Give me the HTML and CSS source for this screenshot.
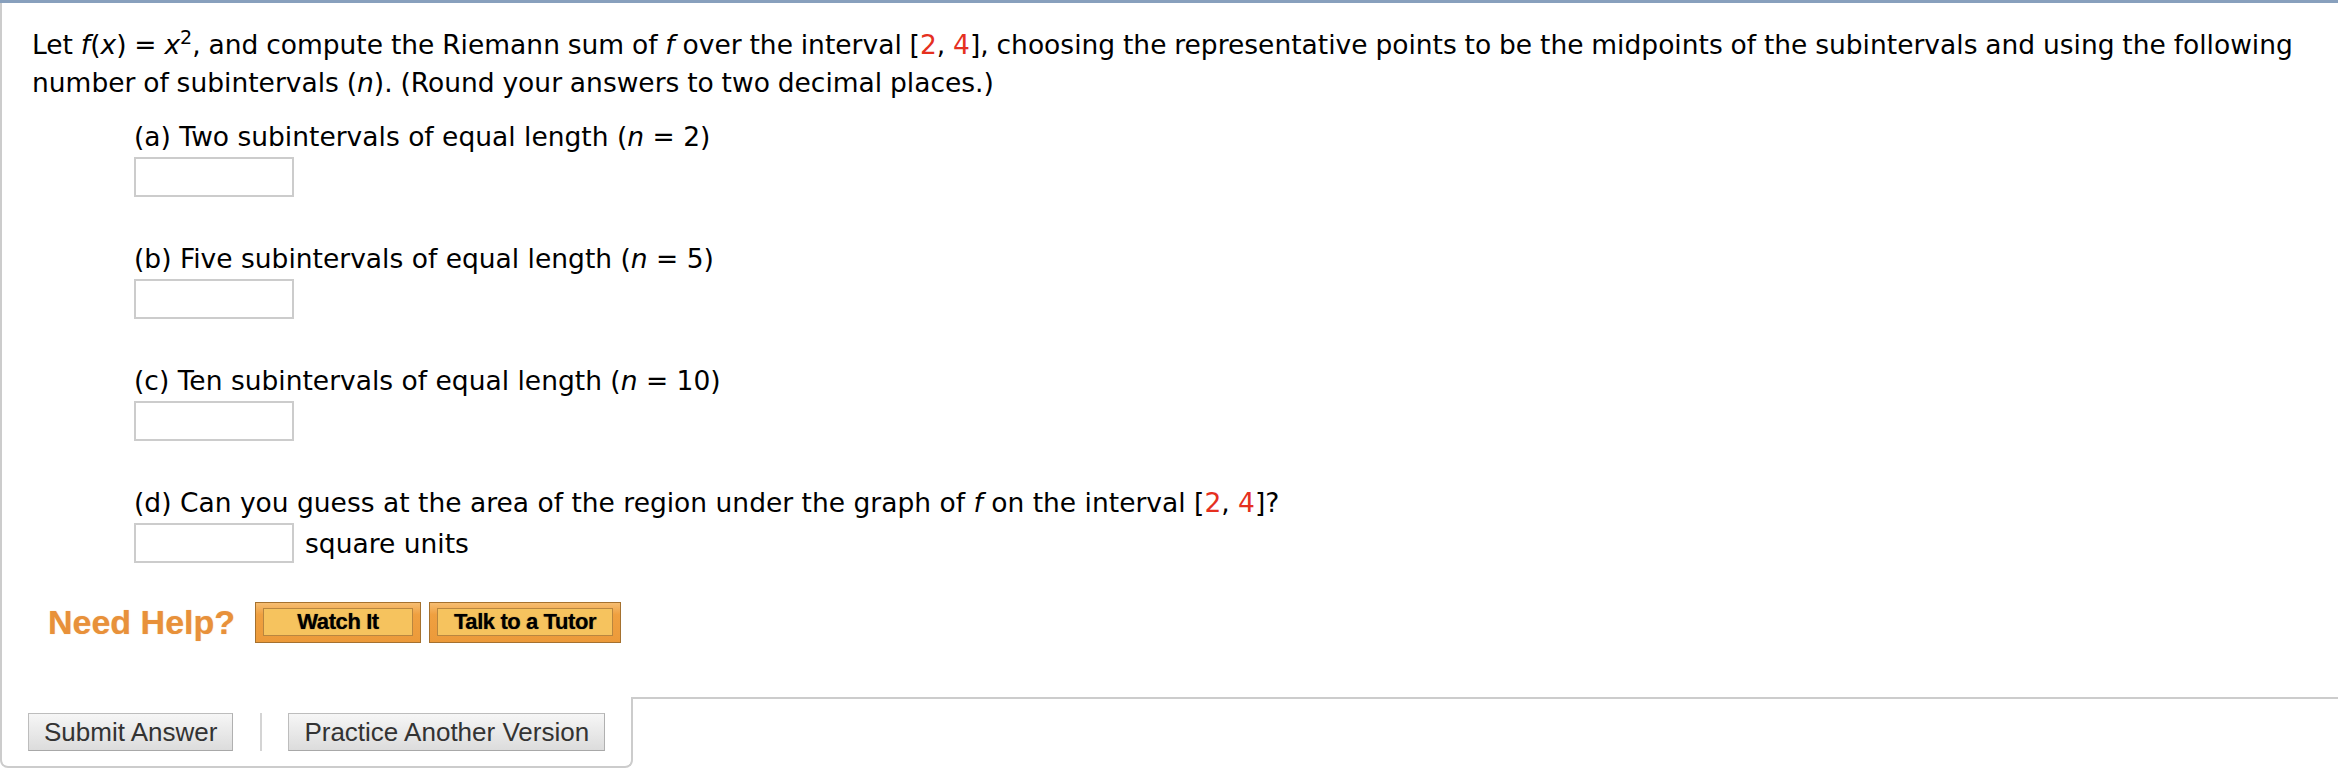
FILE: index.html
```html
<!DOCTYPE html>
<html lang="en">
<head>
<meta charset="utf-8">
<title>Riemann sum</title>
<link rel="stylesheet" href="styles.css">
</head>
<body>
<div class="question">
  <div class="qbody">
    <p class="stem">Let <i>f</i>(<i>x</i>) = <i>x</i><sup>2</sup>, and compute the Riemann sum of <i>f</i> over the interval [<span class="red">2</span>, <span class="red">4</span>], choosing the representative points to be the midpoints of the subintervals and using the following number of subintervals (<i>n</i>). (Round your answers to two decimal places.)</p>
    <div class="parts">
      <div class="part">
        <div class="label">(a) Two subintervals of equal length (<i>n</i> = 2)</div>
        <div class="answer"><input type="text" aria-label="answer a"></div>
      </div>
      <div class="part">
        <div class="label">(b) Five subintervals of equal length (<i>n</i> = 5)</div>
        <div class="answer"><input type="text" aria-label="answer b"></div>
      </div>
      <div class="part">
        <div class="label">(c) Ten subintervals of equal length (<i>n</i> = 10)</div>
        <div class="answer"><input type="text" aria-label="answer c"></div>
      </div>
      <div class="part">
        <div class="label">(d) Can you guess at the area of the region under the graph of <i>f</i> on the interval [<span class="red">2</span>, <span class="red">4</span>]?</div>
        <div class="answer"><input type="text" aria-label="answer d"><span>square units</span></div>
      </div>
    </div>
    <div class="help">
      <span class="need">Need Help?</span>
      <a class="help-btn watch" href="#"><span>Watch It</span></a>
      <a class="help-btn tutor" href="#"><span>Talk to a Tutor</span></a>
    </div>
  </div>
  <div class="footer">
    <div class="tab">
      <button class="btn" type="button">Submit Answer</button>
      <span class="sep"></span>
      <button class="btn" type="button">Practice Another Version</button>
    </div>
    <div class="filler"></div>
  </div>
</div>
</body>
</html>
```
FILE: styles.css
```css
html, body {
  margin: 0;
  padding: 0;
  background: #ffffff;
}

body {
  font-family: "DejaVu Sans", Verdana, sans-serif;
  font-size: 26.5px;
  color: #000000;
}

.question {
  border-top: 3px solid #88a0bd;
}

.qbody {
  border-left: 2px solid #cccccc;
  padding: 23px 0 54px 30px;
}

.stem {
  margin: 0;
  line-height: 38px;
  word-spacing: -0.6px;
}

sup {
  font-size: 0.72em;
  line-height: 0;
  vertical-align: 0.5em;
}

.red {
  color: #e5301f;
}

.parts {
  margin: 16px 0 0 102px;
}

.part + .part {
  margin-top: 43px;
}

.label {
  line-height: 38px;
}

.answer {
  display: flex;
  align-items: center;
  gap: 11px;
  margin-top: 1px;
}

.answer input {
  box-sizing: border-box;
  width: 160px;
  height: 40px;
  margin: 0;
  padding: 0 6px;
  border: 2px solid #cccccc;
  background: #ffffff;
  font: inherit;
}

.help {
  display: flex;
  align-items: center;
  margin: 39px 0 0 16px;
}

.need {
  font-family: "Liberation Sans", Arial, sans-serif;
  font-weight: bold;
  font-size: 34px;
  color: #e8913a;
  margin-right: 20px;
  text-shadow: 0 0 1px rgba(232, 145, 58, 0.6);
}

.help-btn {
  display: block;
  box-sizing: border-box;
  height: 41px;
  padding: 5px 7px 6px 7px;
  border: 1px solid #a5712f;
  background: linear-gradient(#f6bd72 0%, #efa040 30%, #ec9a3a 100%);
  text-decoration: none;
  color: #000000;
}

.help-btn + .help-btn {
  margin-left: 8px;
}

.watch {
  width: 166px;
}

.tutor {
  width: 192px;
}

.help-btn span {
  display: flex;
  align-items: center;
  justify-content: center;
  box-sizing: border-box;
  height: 100%;
  border: 1px solid #b9863f;
  background: #f6c35e;
  font-family: "Liberation Sans", Arial, sans-serif;
  font-weight: bold;
  font-size: 22px;
  letter-spacing: -0.4px;
  text-shadow: 0 0 1px rgba(0, 0, 0, 0.6);
}

.footer {
  display: flex;
}

.tab {
  box-sizing: border-box;
  width: 633px;
  display: flex;
  align-items: center;
  padding: 16px 0 15px 26px;
  border-left: 2px solid #cccccc;
  border-right: 2px solid #cccccc;
  border-bottom: 2px solid #cccccc;
  border-radius: 0 0 8px 8px;
}

.filler {
  flex: 1;
  border-top: 2px solid #cccccc;
}

.btn {
  box-sizing: border-box;
  height: 38px;
  margin: 0;
  padding: 0 15px;
  border: 1px solid #bdbdbd;
  border-bottom-color: #a8a8a8;
  border-right-color: #b0b0b0;
  border-radius: 0;
  background: linear-gradient(#f6f6f6, #dcdcdc);
  font-family: "Liberation Sans", Arial, sans-serif;
  font-size: 26px;
  color: #333333;
  line-height: 36px;
}

.sep {
  width: 2px;
  height: 38px;
  margin: 0 26px 0 27px;
  background: #d4d4d4;
}
```
